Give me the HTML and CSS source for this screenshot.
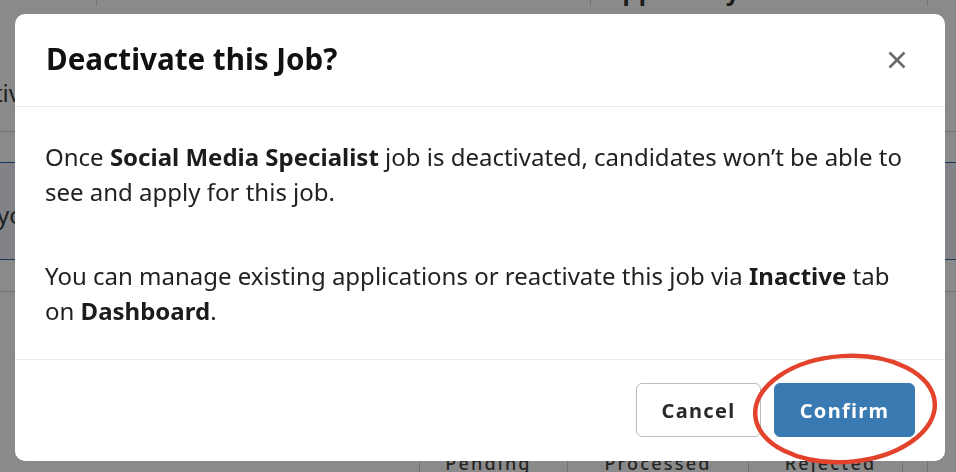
FILE: index.html
```html
<!DOCTYPE html>
<html lang="en">
<head>
<meta charset="utf-8">
<title>Deactivate this Job?</title>
<link rel="stylesheet" href="styles.css">
</head>
<body>
<div class="app">
  <div class="row row-top">
    <div class="cell c1"></div>
    <div class="cell c2"></div>
    <div class="cell c3"><span class="apply">Applied by</span></div>
    <div class="cell c4"></div>
  </div>
  <div class="row row-a"><span class="clip-text">Inactive</span></div>
  <div class="row row-b"></div>
  <div class="row row-sel"><span class="clip-text">you</span></div>
  <div class="row row-c"></div>
  <div class="spacer"></div>
  <div class="tabs">
    <div class="tab tab-lead"></div>
    <div class="tab t1">Pending</div>
    <div class="tab t2">Processed</div>
    <div class="tab t3">Rejected</div>
    <div class="tab t4"></div>
    <div class="tab t5"></div>
  </div>
</div>

<div class="overlay">
  <div class="modal" role="dialog" aria-labelledby="modal-title">
    <div class="modal-header">
      <h2 class="modal-title" id="modal-title">Deactivate this Job?</h2>
      <button class="close-btn" aria-label="Close">
        <svg width="18" height="18" viewBox="0 0 18 18" aria-hidden="true">
          <path d="M1.5 1.5 L16.5 16.5 M16.5 1.5 L1.5 16.5" stroke="#6b6b6b" stroke-width="2.6" stroke-linecap="butt" fill="none"/>
        </svg>
      </button>
    </div>
    <div class="modal-body">
      <p>Once <strong>Social Media Specialist</strong> job is deactivated, candidates won’t be able to see and apply for this job.</p>
      <p>You can manage existing applications or reactivate this job via <strong>Inactive</strong> tab on <strong>Dashboard</strong>.</p>
    </div>
    <div class="modal-footer">
      <button class="btn btn-cancel">Cancel</button>
      <button class="btn btn-confirm">Confirm</button>
    </div>
  </div>
</div>

<svg class="annotation" width="200" height="124" viewBox="0 0 200 124" aria-hidden="true">
  <ellipse cx="100" cy="62" rx="90" ry="53" transform="rotate(-4 100 62)" fill="none" stroke="#e3432c" stroke-width="4.5"/>
</svg>
</body>
</html>
```

FILE: styles.css
```css
* { box-sizing: border-box; }

html, body {
  margin: 0;
  padding: 0;
}

body {
  width: 956px;
  height: 472px;
  overflow: hidden;
  font-family: "Noto Sans", "Open Sans", "Liberation Sans", sans-serif;
  background: #ffffff;
  position: relative;
}

/* ---------- background app ---------- */
.app {
  height: 472px;
  display: flex;
  flex-direction: column;
  background: #ffffff;
  overflow: hidden;
}

.row {
  display: flex;
  flex-shrink: 0;
}

.row-top {
  height: 6px;
  align-items: stretch;
}

.cell {
  border-right: 1px solid #d6d6d6;
  overflow: hidden;
  display: flex;
  align-items: flex-start;
}

.c1 { width: 97px; }
.c2 { width: 494px; }
.c3 { width: 337px; padding-left: 14px; }
.c4 { flex: 1; border-right: 0; }

.apply {
  display: block;
  font-size: 24px;
  font-weight: 700;
  line-height: 24px;
  margin-top: -21px;
  color: #333;
  letter-spacing: 1px;
  white-space: nowrap;
}

.row-a {
  height: 126px;
  border-bottom: 1px solid #d2d2d2;
  align-items: flex-end;
  padding-bottom: 22px;
}

.clip-text {
  font-size: 24px;
  color: #3b3b3b;
  white-space: nowrap;
  margin-left: -54px;
}

.row-b {
  height: 31px;
  border-bottom: 1px solid #2f6fa8;
}

.row-sel {
  height: 97px;
  background: #eef3f8;
  border-bottom: 1px solid #2f6fa8;
  align-items: center;
  padding-top: 6px;
}

.row-sel .clip-text {
  margin-left: -3px;
}

.row-c {
  height: 32px;
  border-bottom: 1px solid #d2d2d2;
}

.spacer {
  flex: 1;
}

.tabs {
  display: flex;
  height: 40px;
  flex-shrink: 0;
  margin-bottom: -19px;
}

.tab {
  border-left: 1px solid #d2d2d2;
  display: flex;
  align-items: flex-start;
  justify-content: center;
  font-size: 18px;
  line-height: 24px;
  font-weight: 500;
  letter-spacing: 2.2px;
  color: #444444;
}

.tab-lead { width: 419px; border-left: 0; }
.t1 { width: 148px; padding-right: 10px; }
.t2 { width: 181px; }
.t3 { width: 154px; padding-left: 10px; }
.t4 { width: 25px; }
.t5 { flex: 1; }

/* ---------- overlay + modal ---------- */
.overlay {
  position: fixed;
  inset: 0;
  background: rgba(0, 0, 0, 0.46);
  padding: 14px 0 0 15px;
}

.modal {
  width: 930px;
  height: 447px;
  background: #ffffff;
  border-radius: 10px;
  display: flex;
  flex-direction: column;
  overflow: hidden;
}

.modal-header {
  height: 93px;
  padding: 0 39px 0 31px;
  display: flex;
  align-items: center;
  justify-content: space-between;
  border-bottom: 1px solid #ebebeb;
  flex-shrink: 0;
}

.modal-title {
  margin: 0;
  font-size: 29.6px;
  font-weight: 700;
  color: #111111;
  line-height: 38px;
  padding-bottom: 2px;
}

.close-btn {
  border: 0;
  background: transparent;
  padding: 0;
  width: 18px;
  height: 18px;
  display: flex;
  cursor: pointer;
}

.modal-body {
  flex: 1;
  padding: 33px 30px 0 30px;
}

.modal-body p {
  margin: 0;
  font-size: 24px;
  line-height: 34.5px;
  color: #222222;
}

.modal-body p + p {
  margin-top: 50px;
}

.modal-body strong {
  font-weight: 700;
  color: #1c1c1c;
}

.modal-footer {
  flex-shrink: 0;
  border-top: 1px solid #ebebeb;
  padding: 23px 30px 24px 30px;
  display: flex;
  justify-content: flex-end;
  gap: 13px;
}

.btn {
  height: 54px;
  border-radius: 6px;
  font-family: "Noto Sans", "Open Sans", "Liberation Sans", sans-serif;
  font-size: 20px;
  font-weight: 700;
  letter-spacing: 1.3px;
  cursor: pointer;
}

.btn-cancel {
  width: 125px;
  background: #ffffff;
  color: #2a2a2a;
  border: 1px solid #bdbdbd;
}

.btn-confirm {
  width: 141px;
  background: #3a7ab2;
  color: #ffffff;
  border: 1px solid #3a7ab2;
}

/* ---------- annotation ---------- */
.annotation {
  position: absolute;
  left: 745px;
  top: 347px;
  pointer-events: none;
}
```
